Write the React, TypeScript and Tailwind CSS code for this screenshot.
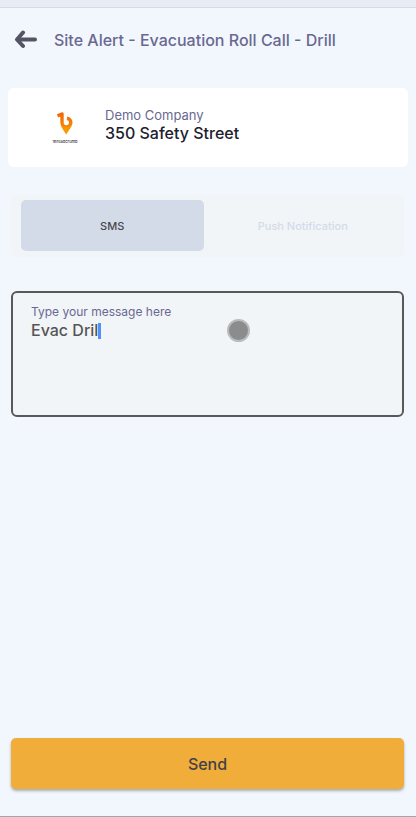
import { useState } from 'react';

type Channel = 'sms' | 'push';

const channels: { id: Channel; label: string }[] = [
    { id: 'sms', label: 'SMS' },
    { id: 'push', label: 'Push Notification' },
];

function BackArrow() {
    return (
        <svg className="w-6 h-5" viewBox="0 0 24 20" fill="none" stroke="currentColor" strokeWidth="4" strokeLinecap="round" strokeLinejoin="round" aria-hidden="true">
            <path d="M21 9.500H4" />
            <path d="M9 2.500L3 9.500l6 6.500" />
        </svg>
    );
}

function CompanyLogo() {
    return (
        <div className="flex flex-col items-center w-7">
            <svg className="w-4 h-6" viewBox="0 0 16 24" fill="none" aria-hidden="true">
                <defs>
                    <linearGradient id="pin" x1="0" y1="0" x2="0" y2="24" gradientUnits="userSpaceOnUse">
                        <stop offset="0" stopColor="#ee6208" />
                        <stop offset="1" stopColor="#f99c05" />
                    </linearGradient>
                </defs>
                <path d="M0.500 4.800L5 3V11.500a4.400 4.400 0 1 0 5-4.300" stroke="url(#pin)" strokeWidth="3.400" strokeLinejoin="round" />
                <path d="M3.400 14.500c3.500 2.400 8.500 2.400 11.700 0L9.200 23.600z" fill="#f79806" />
            </svg>
            <span className="mt-1 text-[4px] leading-[6px] font-medium text-[#33333b]">1Breadcrumb</span>
        </div>
    );
}

export default function App() {
    const [channel, setChannel] = useState<Channel>('sms');
    const [message, setMessage] = useState('Evac Dril');

    return (
        <div className="flex flex-col min-h-screen bg-[#f2f7fe] border-b border-[#a3a5a9] font-['Inter',sans-serif]">
            <div className="h-2 bg-[#e8ecf5] border-b border-[#d9dade]" />

            <header className="flex items-center gap-4 h-16 px-3.5">
                <button type="button" aria-label="Back" className="text-[#555463]">
                    <BackArrow />
                </button>
                <h1 className="text-base font-medium text-[#6a6891]">Site Alert - Evacuation Roll Call - Drill</h1>
            </header>

            <section className="flex items-center gap-[26px] mx-2 mt-4 h-[79px] pl-[43px] rounded-md bg-white">
                <CompanyLogo />
                <div className="pb-2">
                    <p className="text-[13px] leading-[18px] text-[#6a6891]">Demo Company</p>
                    <p className="text-base leading-[18px] font-medium text-[#20202f]">350 Safety Street</p>
                </div>
            </section>

            <div role="tablist" className="grid grid-cols-2 gap-2 ml-[11px] mr-3 mt-7 px-2.5 pt-[5px] pb-1.5 rounded-md bg-[#f1f5f8]">
                {channels.map(({ id, label }) => (
                    <button
                        key={id}
                        type="button"
                        role="tab"
                        aria-selected={channel === id}
                        onClick={() => setChannel(id)}
                        className={`h-[51px] pt-px rounded-[5px] text-[11px] font-medium ${
                            channel === id ? 'bg-[#d4dbe8] text-[#48484d]' : 'text-[#d4dbe8]'
                        }`}
                    >
                        {label}
                    </button>
                ))}
            </div>

            <div className="relative flex flex-col ml-[11px] mr-3 mt-[34px] h-[126px] px-[18px] pt-[11px] rounded-md border-2 border-[#5a5858] bg-[#f1f5f8]">
                <label htmlFor="message" className="text-xs leading-4 text-[#6a6891]">Type your message here</label>
                <textarea
                    id="message"
                    value={message}
                    onChange={(e) => setMessage(e.target.value)}
                    className="flex-1 w-full resize-none bg-transparent text-base leading-5 font-medium text-[#555555] caret-[#4f93f8] outline-none"
                />
                {/* text cursor */}
                <span className="absolute left-[85px] top-[30px] w-[3px] h-4 bg-[#4f93f8]" />
                {/* touch pointer */}
                <span className="absolute left-[214px] top-[26px] size-[23px] rounded-full border-2 border-[#b9bbbc] bg-[#8b8c8d]" />
            </div>

            <button type="button" className="mt-auto ml-[11px] mr-3 mb-[27px] h-[51px] rounded-[5px] bg-[#f0ad3a] text-base font-medium text-[#43404a] shadow-[0_2px_3px_rgba(0,0,0,0.3)]">
                Send
            </button>
        </div>
    );
}
